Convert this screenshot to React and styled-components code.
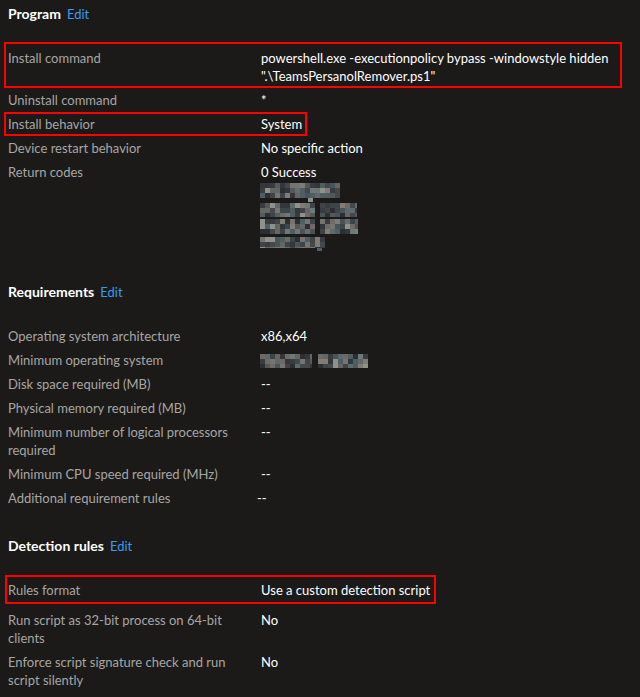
import React from "react";
import styled, { createGlobalStyle, css } from "styled-components";

const GlobalStyle = createGlobalStyle`
  html, body {
    margin: 0;
    background: #1b1a19;
  }
  body {
    font-family: "Segoe UI", Lato, "Liberation Sans", sans-serif;
    font-size: 13px;
    -webkit-font-smoothing: antialiased;
  }
`;

const Page = styled.div`
  padding: 4px 8px 0;
  width: 624px;
`;

const Section = styled.section`
  margin-top: ${(p) => p.$top || 0}px;
`;

const Heading = styled.h2`
  display: flex;
  align-items: baseline;
  gap: 6px;
  margin: 0 0 22px;
  font-size: 14px;
  font-weight: 700;
  line-height: 20px;
  color: #ffffff;
`;

const EditLink = styled.a`
  font-size: 13px;
  font-weight: 400;
  color: #3a9bf0;
  cursor: pointer;
`;

const Row = styled.div`
  position: relative;
  display: grid;
  grid-template-columns: 253px 1fr;
  padding: 3px 0;
  line-height: 18px;
  margin-bottom: ${(p) => p.$gap || 0}px;

  ${(p) =>
    p.$box &&
    css`
      &::after {
        content: "";
        position: absolute;
        top: ${p.$box.t}px;
        right: ${p.$box.r}px;
        bottom: ${p.$box.b}px;
        left: ${p.$box.l}px;
        border: 2px solid #ff0000;
        pointer-events: none;
      }
    `}
`;

const Label = styled.div`
  color: #a8a6a4;
`;

const Value = styled.div`
  color: #ffffff;
  margin-left: ${(p) => p.$shift || 0}px;
`;

const Blur = styled.svg`
  display: block;
  margin-left: -1px;
`;

const palette = [
  "#2c2e31", "#383b3f", "#45484b", "#55585a", "#646664", "#76746f",
  "#4d5f64", "#47545c", "#6b797b", "#827c76", "#3b464b", "#8f918b",
  "#5e6a6c", "#6f6a66", "#33373b", "#404448",
];

function Mosaic({ width, height, segments, seed }) {
  let s = seed;
  const next = () => {
    s = (s * 9301 + 49297) % 233280;
    return s / 233280;
  };
  const cells = [];
  segments.forEach(([x0, y0, w, h], si) => {
    for (let y = y0; y < y0 + h; y += 5) {
      for (let x = x0; x < x0 + w; x += 5) {
        cells.push(
          <rect
            key={`${si}-${x}-${y}`}
            x={x}
            y={y}
            width={Math.min(5, x0 + w - x)}
            height={Math.min(5, y0 + h - y)}
            fill={palette[Math.floor(next() * palette.length)]}
          />
        );
      }
    }
  });
  return (
    <Blur width={width} height={height} viewBox={`0 0 ${width} ${height}`}>
      {cells}
    </Blur>
  );
}

const returnCodeBlur = [
  [0, 2, 80, 15],
  [48, 17, 5, 4],
  [0, 22, 55, 14],
  [60, 22, 37, 14],
  [0, 38, 55, 15],
  [60, 38, 38, 15],
  [0, 56, 65, 11],
  [57, 67, 5, 3],
];

const osBlur = [
  [0, 3, 52, 14],
  [58, 3, 50, 14],
];

function Field({ label, children, box, gap, shift }) {
  return (
    <Row $box={box} $gap={gap}>
      <Label>{label}</Label>
      <Value $shift={shift}>{children}</Value>
    </Row>
  );
}

export default function App() {
  return (
    <>
      <GlobalStyle />
      <Page>
        <Section>
          <Heading>
            Program <EditLink>Edit</EditLink>
          </Heading>
          <Field label="Install command" box={{ t: -4, r: 10, b: 0, l: -4 }}>
            powershell.exe -executionpolicy bypass -windowstyle hidden
            <br />
            ".\TeamsPersanolRemover.ps1"
          </Field>
          <Field label="Uninstall command">*</Field>
          <Field label="Install behavior" box={{ t: 0, r: 325, b: 0, l: -4 }}>
            System
          </Field>
          <Field label="Device restart behavior">No specific action</Field>
          <Field label="Return codes">
            0 Success
            <Mosaic width={100} height={70} segments={returnCodeBlur} seed={17} />
          </Field>
        </Section>

        <Section $top={28}>
          <Heading>
            Requirements <EditLink>Edit</EditLink>
          </Heading>
          <Field label="Operating system architecture">x86,x64</Field>
          <Field label="Minimum operating system">
            <Mosaic width={110} height={18} segments={osBlur} seed={91} />
          </Field>
          <Field label="Disk space required (MB)">--</Field>
          <Field label="Physical memory required (MB)">--</Field>
          <Field
            label={
              <>
                Minimum number of logical processors
                <br />
                required
              </>
            }
          >
            --
          </Field>
          <Field label="Minimum CPU speed required (MHz)">--</Field>
          <Field label="Additional requirement rules" shift={-4}>
            --
          </Field>
        </Section>

        <Section $top={26}>
          <Heading>
            Detection rules <EditLink>Edit</EditLink>
          </Heading>
          <Field
            label="Rules format"
            gap={6}
            box={{ t: -3, r: 196, b: -2, l: -3 }}
          >
            Use a custom detection script
          </Field>
          <Field
            label={
              <>
                Run script as 32-bit process on 64-bit
                <br />
                clients
              </>
            }
          >
            No
          </Field>
          <Field
            label={
              <>
                Enforce script signature check and run
                <br />
                script silently
              </>
            }
          >
            No
          </Field>
        </Section>
      </Page>
    </>
  );
}
